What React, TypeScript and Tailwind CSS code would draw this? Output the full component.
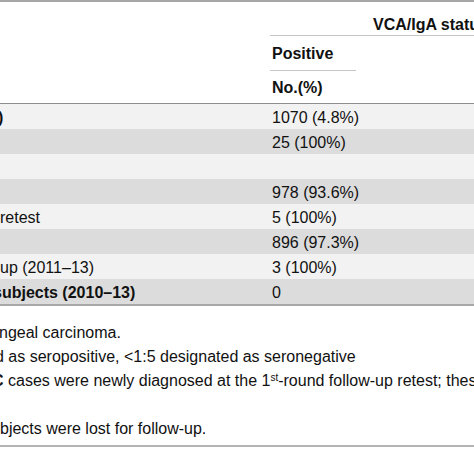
import React from 'react';

// rows of the table body; left column is cut off by the crop, so only the tail of each label shows
const ROWS = [
    { label: ')', bold: true, shift: '-ml-[2px]', value: '1070 (4.8%)', bg: 'bg-[#f2f2f2]' },
    { label: '', bold: false, shift: '', value: '25 (100%)', bg: 'bg-[#dcdcdc]' },
    { label: '', bold: false, shift: '', value: '', bg: 'bg-[#f2f2f2]' },
    { label: '', bold: false, shift: '', value: '978 (93.6%)', bg: 'bg-[#dcdcdc]' },
    { label: 'retest', bold: false, shift: '', value: '5 (100%)', bg: 'bg-[#f2f2f2]' },
    { label: '', bold: false, shift: '', value: '896 (97.3%)', bg: 'bg-[#dcdcdc]' },
    { label: 'up (2011–13)', bold: false, shift: '', value: '3 (100%)', bg: 'bg-[#f2f2f2]' },
    { label: 'subjects (2010–13)', bold: true, shift: '-ml-[7px]', value: '0', bg: 'bg-[#dcdcdc]' },
];

export default function App() {
    return (
        <div className="w-[474px] h-[474px] overflow-hidden bg-white text-[16px] text-[#111] font-['Liberation_Sans',Arial,sans-serif]">
            {/* top rule */}
            <div className="h-[2px] bg-[#a6a6a6]"></div>

            {/* header */}
            <div className="flex">
                <div className="w-[270px] shrink-0"></div>
                <div className="flex-1 h-[34px] pt-[13px] pl-[103px] leading-[20px] font-bold whitespace-nowrap overflow-hidden border-b border-[#c6c6c6]">
                    VCA/IgA status
                </div>
            </div>
            <div className="flex">
                <div className="w-[270px] shrink-0"></div>
                <div className="w-[86px] h-[35px] pt-[8px] pl-[2px] leading-[20px] font-bold border-b border-[#c6c6c6]">
                    Positive
                </div>
            </div>
            <div className="flex">
                <div className="w-[270px] shrink-0"></div>
                <div className="h-[32px] pt-[7px] pl-[2px] leading-[20px] font-bold">No.(%)</div>
            </div>
            <div className="h-px bg-[#8e8e8e]"></div>

            {/* body */}
            {ROWS.map((row, i) => (
                <div key={i} className={`flex h-[25px] pt-[3px] leading-[22px] ${row.bg}`}>
                    <div className="w-[270px] shrink-0 overflow-hidden whitespace-nowrap">
                        <span className={`inline-block ${row.shift} ${row.bold ? 'font-bold' : ''}`}>{row.label}</span>
                    </div>
                    <div className="pl-[2px] whitespace-nowrap">{row.value}</div>
                </div>
            ))}
            <div className="h-[2px] bg-[#a8a8a8]"></div>

            {/* footnotes */}
            <div className="pt-[15px] pb-[4px] leading-[24px] whitespace-nowrap overflow-hidden">
                <div className="-ml-px">ngeal carcinoma.</div>
                <div className="-ml-[5px]">d as seropositive, &lt;1:5 designated as seronegative</div>
                <div className="-ml-[8px]">
                    <span className="font-bold">C</span> cases were newly diagnosed at the 1
                    <sup className="text-[10px]">st</sup>-round follow-up retest; these were
                </div>
                <div className="h-[24px]"></div>
                <div>bjects were lost for follow-up.</div>
            </div>
            <div className="h-[2px] bg-[#b4b4b4]"></div>
        </div>
    );
}
